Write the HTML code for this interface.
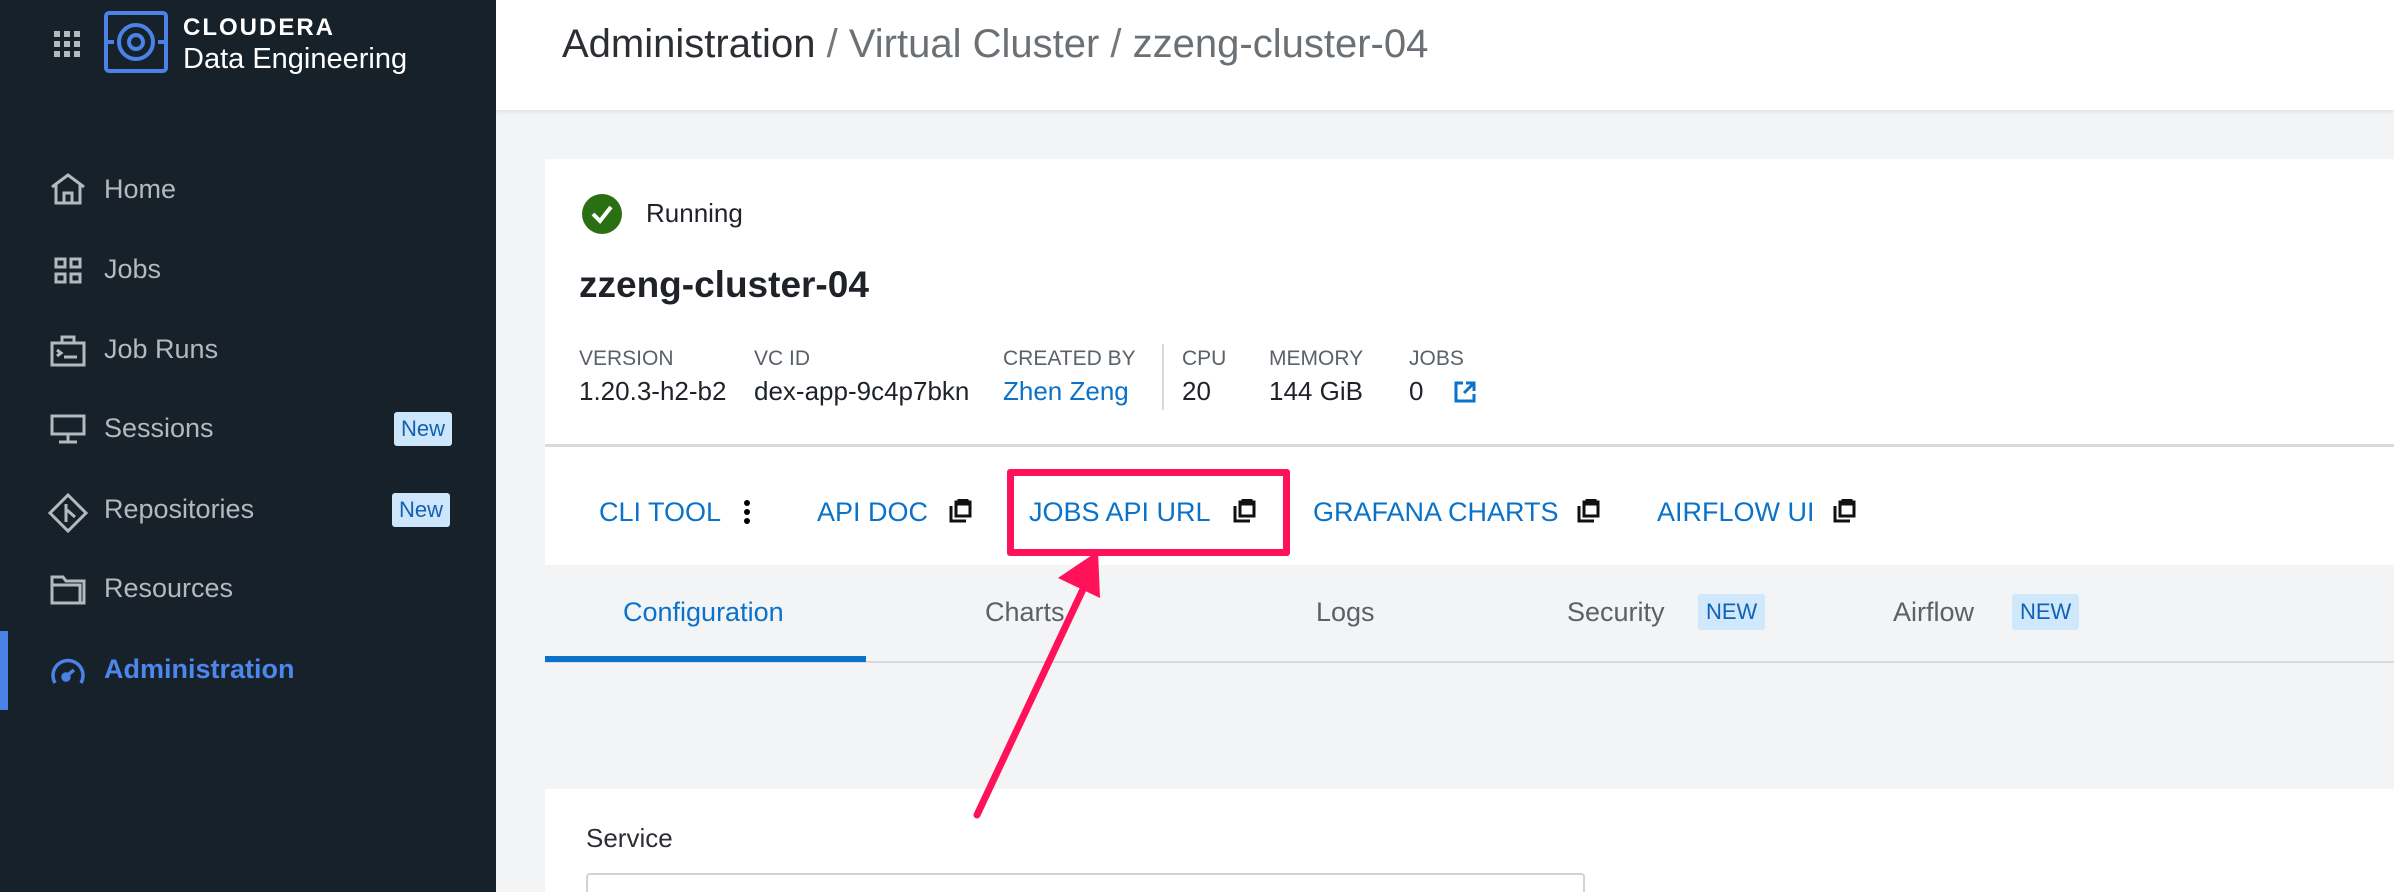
<!DOCTYPE html>
<html style="overflow:hidden;width:2394px;height:892px"><head><meta charset="utf-8"><style>
*{margin:0;padding:0;box-sizing:border-box}
body{width:2394px;height:892px;overflow:hidden;position:relative;background:#f3f4f6;font-family:"Liberation Sans",sans-serif}
.a{position:absolute;white-space:nowrap}
#side{left:0;top:0;width:496px;height:892px;background:#16212a}
.nav{font-size:27px;color:#b4b9be;left:104px}
.ic{left:50px;width:36px;height:36px}
.new{background:#cde6fb;color:#1560b0;font-size:22px;border-radius:3px;padding:4px 7px}
.lbl{font-size:21px;color:#5a6168;top:347px}
.val{font-size:26px;color:#1f2328;top:376px}
.lnk{font-size:27px;color:#0a72c8;top:497px}
.tab{font-size:27px;color:#5a6168;top:597px}
.badge{background:#cfe8fb;color:#1062b6;font-size:22px;padding:5px 8px;border-radius:3px;top:594px}
</style></head><body>
<div id="side" class="a">
 <svg class="a" style="left:54px;top:31px" width="26" height="26" viewBox="0 0 26 26" fill="#b4b9be"><rect x="0" y="0" width="6" height="6"/><rect x="10" y="0" width="6" height="6"/><rect x="20" y="0" width="6" height="6"/><rect x="0" y="10" width="6" height="6"/><rect x="10" y="10" width="6" height="6"/><rect x="20" y="10" width="6" height="6"/><rect x="0" y="20" width="6" height="6"/><rect x="10" y="20" width="6" height="6"/><rect x="20" y="20" width="6" height="6"/></svg>
 <svg class="a" style="left:104px;top:11px" width="64" height="62" viewBox="0 0 64 62"><rect x="2" y="2" width="60" height="58" rx="3" fill="none" stroke="#4a82e8" stroke-width="4"/><line x1="2" y1="31" x2="10" y2="31" stroke="#4a82e8" stroke-width="4"/><line x1="54" y1="31" x2="62" y2="31" stroke="#4a82e8" stroke-width="4"/><circle cx="32" cy="31" r="17" fill="none" stroke="#4a82e8" stroke-width="4"/><circle cx="32" cy="31" r="7" fill="none" stroke="#4a82e8" stroke-width="4"/></svg>
 <div class="a" style="left:183px;top:14px;font-size:24px;font-weight:bold;color:#fff;letter-spacing:2px">CLOUDERA</div>
 <div class="a" style="left:183px;top:43px;font-size:29px;color:#fff">Data Engineering</div>
 <svg class="a ic" style="top:171px" viewBox="0 0 36 36" fill="none" stroke="#b4b9be" stroke-width="3"><path d="M2 16 L18 4 L34 16 M6 13 V32 H30 V13 M14 32 V22 H22 V32"/></svg>
 <div class="a nav" style="top:174px">Home</div>
 <svg class="a ic" style="top:253px" viewBox="0 0 36 36" fill="none" stroke="#b4b9be" stroke-width="3"><rect x="6" y="6" width="9" height="8"/><rect x="21" y="6" width="9" height="8"/><rect x="6" y="21" width="9" height="8"/><rect x="21" y="21" width="9" height="8"/></svg>
 <div class="a nav" style="top:254px">Jobs</div>
 <svg class="a ic" style="top:333px" viewBox="0 0 36 36" fill="none" stroke="#b4b9be" stroke-width="3"><rect x="2" y="10" width="32" height="22"/><path d="M12 10 V4 H24 V10 M7 17 L11 20 L7 23 M14 24 H27"/></svg>
 <div class="a nav" style="top:334px">Job Runs</div>
 <svg class="a ic" style="top:411px" viewBox="0 0 36 36" fill="none" stroke="#b4b9be" stroke-width="3"><rect x="2" y="5" width="32" height="18"/><path d="M18 23 V30 M9 31 H27"/></svg>
 <div class="a nav" style="top:413px">Sessions</div>
 <div class="a new" style="left:394px;top:412px">New</div>
 <svg class="a ic" style="top:492px;left:47px;width:42px;height:42px" viewBox="0 0 42 42" fill="none" stroke="#b4b9be" stroke-width="3"><path d="M21 3 L39 21 L21 39 L3 21 Z M19 12 V30 M20 18 L28 25"/></svg>
 <div class="a nav" style="top:494px">Repositories</div>
 <div class="a new" style="left:392px;top:493px">New</div>
 <svg class="a ic" style="top:571px" viewBox="0 0 36 36" fill="none" stroke="#b4b9be" stroke-width="3"><path d="M2 6 H13 L16 10 H34 V32 H2 Z M2 14 H30 V32"/></svg>
 <div class="a nav" style="top:573px">Resources</div>
 <div class="a" style="left:0;top:631px;width:8px;height:79px;background:#4a82e8"></div>
 <svg class="a ic" style="top:653px" viewBox="0 0 36 36" fill="none" stroke="#4a82e8" stroke-width="3.5"><path d="M5 30 A15 15 0 1 1 31 30"/><path d="M15 24 L24 17" /><circle cx="16" cy="24" r="3" fill="#4a82e8"/></svg>
 <div class="a nav" style="top:654px;color:#4d86ec;font-weight:bold">Administration</div>
</div>
<div class="a" style="left:496px;top:0;width:1898px;height:110px;background:#fff;box-shadow:0 2px 4px rgba(0,0,0,.08)"></div>
<div class="a" style="left:562px;top:22px;font-size:40px;color:#2b2f33">Administration <span style="color:#777">/</span> <span style="color:#6b7075">Virtual Cluster</span> <span style="color:#777">/</span> <span style="color:#6b7075">zzeng-cluster-04</span></div>
<div class="a" style="left:545px;top:159px;width:1849px;height:406px;background:#fff"></div>
<div class="a" style="left:545px;top:444px;width:1849px;height:3px;background:#d8dadd"></div>
<svg class="a" style="left:582px;top:194px" width="40" height="40"><circle cx="20" cy="20" r="20" fill="#2a7012"/><path d="M11 20 L18 27 L29 13" fill="none" stroke="#fff" stroke-width="4"/></svg>
<div class="a" style="left:646px;top:198px;font-size:26px;color:#1f2328">Running</div>
<div class="a" style="left:579px;top:264px;font-size:37px;font-weight:bold;color:#1f2328">zzeng-cluster-04</div>
<div class="a lbl" style="left:579px">VERSION</div><div class="a val" style="left:579px">1.20.3-h2-b2</div>
<div class="a lbl" style="left:754px">VC ID</div><div class="a val" style="left:754px">dex-app-9c4p7bkn</div>
<div class="a lbl" style="left:1003px">CREATED BY</div><div class="a val" style="left:1003px;color:#0a72c8">Zhen Zeng</div>
<div class="a" style="left:1162px;top:344px;width:2px;height:66px;background:#d8dadd"></div>
<div class="a lbl" style="left:1182px">CPU</div><div class="a val" style="left:1182px">20</div>
<div class="a lbl" style="left:1269px">MEMORY</div><div class="a val" style="left:1269px">144 GiB</div>
<div class="a lbl" style="left:1409px">JOBS</div><div class="a val" style="left:1409px">0</div>
<svg class="a" style="left:1454px;top:381px" width="22" height="22" viewBox="0 0 22 22" fill="none" stroke="#0a72c8" stroke-width="3"><path d="M9 2 H2 V20 H20 V13 M12 2 H20 V10 M20 2 L10 12"/></svg>
<div class="a lnk" style="left:599px">CLI TOOL</div>
<svg class="a" style="left:742px;top:499px" width="10" height="26"><circle cx="5" cy="4" r="3"/><circle cx="5" cy="13" r="3"/><circle cx="5" cy="22" r="3"/></svg>
<div class="a lnk" style="left:817px">API DOC</div>
<div class="a lnk" style="left:1029px">JOBS API URL</div>
<div class="a lnk" style="left:1313px">GRAFANA CHARTS</div>
<div class="a lnk" style="left:1657px">AIRFLOW UI</div>
<svg width="0" height="0" style="position:absolute"><defs><g id="cp" fill="none" stroke="#111" stroke-width="3"><path d="M2 7 V22 H17"/><rect x="7" y="3" width="14" height="14"/><rect x="10" y="1" width="8" height="4"/></g></defs></svg>
<svg class="a" style="left:949px;top:499px" width="24" height="24"><use href="#cp"/></svg>
<svg class="a" style="left:1233px;top:499px" width="24" height="24"><use href="#cp"/></svg>
<svg class="a" style="left:1577px;top:499px" width="24" height="24"><use href="#cp"/></svg>
<svg class="a" style="left:1833px;top:499px" width="24" height="24"><use href="#cp"/></svg>
<div class="a" style="left:545px;top:661px;width:1849px;height:2px;background:#d8dadd"></div>
<div class="a" style="left:545px;top:656px;width:321px;height:6px;background:#0a72c8"></div>
<div class="a tab" style="left:623px;color:#0a72c8">Configuration</div>
<div class="a tab" style="left:985px">Charts</div>
<div class="a tab" style="left:1316px">Logs</div>
<div class="a tab" style="left:1567px">Security</div>
<div class="a badge" style="left:1698px">NEW</div>
<div class="a tab" style="left:1893px">Airflow</div>
<div class="a badge" style="left:2012px">NEW</div>
<div class="a" style="left:545px;top:789px;width:1849px;height:103px;background:#fff"></div>
<div class="a" style="left:586px;top:823px;font-size:26px;color:#2b2f33">Service</div>
<div class="a" style="left:586px;top:873px;width:999px;height:19px;border:2px solid #d0d3d7;border-bottom:none;border-radius:4px 4px 0 0;background:#fff"></div>
<div class="a" style="left:1007px;top:469px;width:283px;height:87px;border:7px solid #ff1259;border-radius:3px"></div>
<svg class="a" style="left:0;top:0" width="2394" height="892"><line x1="977" y1="815" x2="1085" y2="585" stroke="#ff1259" stroke-width="7" stroke-linecap="round"/><polygon points="1098,551 1058,578 1100,598" fill="#ff1259"/></svg>
</body></html>
